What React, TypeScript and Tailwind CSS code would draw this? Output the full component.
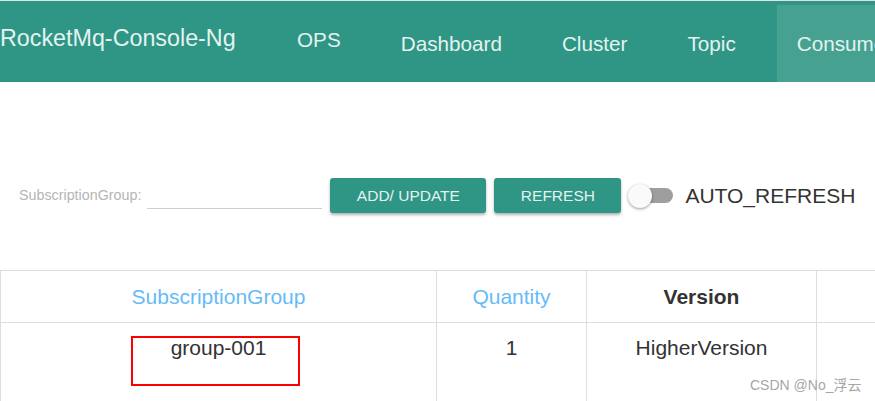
import React from "react";

export default function App() {
  return (
    <div className="relative w-[875px] h-[401px] overflow-hidden bg-white font-['Liberation_Sans',Arial,sans-serif]">
      {/* Header */}
      <div className="bg-[#e2e2e2] pt-[1px]">
        <div className="h-[81px] bg-[#2f9585] flex items-start text-[#e3f3f0] whitespace-nowrap overflow-hidden">
          <div className="w-[297px] shrink-0 mt-[26px] text-[23.3px] leading-[23px]">RocketMq-Console-Ng</div>
          <div className="shrink-0 mt-[28px] text-[20.7px] leading-[21px]">OPS</div>
          <div className="shrink-0 ml-[60px] mt-[32px] text-[20.7px] leading-[21px]">Dashboard</div>
          <div className="shrink-0 ml-[60px] mt-[32px] text-[20.7px] leading-[21px]">Cluster</div>
          <div className="shrink-0 ml-[60px] mt-[32px] text-[20.7px] leading-[21px]">Topic</div>
          <div className="shrink-0 ml-[41px] mt-[4px] h-[77px] bg-[#46a191] pl-[20px] pr-[20px] pt-[28px] text-[20.7px] leading-[21px]">
            Consumer
          </div>
        </div>
      </div>

      {/* Toolbar */}
      <div className="mt-[96px] h-[35px] pl-[19px] flex items-center whitespace-nowrap">
        <span className="text-[14.3px] text-[#b5b5b5] mt-[1px]">SubscriptionGroup:</span>
        <div className="ml-[6px] w-[175px] h-[26px] border-b border-[#cfcfcf]" />
        <button className="ml-[8px] w-[156px] h-[35px] rounded-[3px] bg-[#2f9585] text-[#e3f3f0] text-[15.5px] shadow-[0_2px_3px_rgba(0,0,0,0.3)]">
          ADD/ UPDATE
        </button>
        <button className="ml-[8px] w-[127px] h-[35px] rounded-[3px] bg-[#2f9585] text-[#e3f3f0] text-[15.5px] shadow-[0_2px_3px_rgba(0,0,0,0.3)]">
          REFRESH
        </button>
        <div className="relative ml-[7px] w-[45px] h-[24px] flex items-center">
          <div className="ml-[10px] w-[35px] h-[15px] rounded-full bg-[#9e9e9e]" />
          <div className="absolute left-0 top-0 w-[24px] h-[24px] rounded-full bg-[#fafafa] shadow-[0_1px_3px_rgba(0,0,0,0.4)]" />
        </div>
        <span className="ml-[12px] text-[21px] text-[#333333]">AUTO_REFRESH</span>
      </div>

      {/* Table */}
      <div className="mt-[57px] border-t border-l border-[#dddddd] grid grid-cols-[436px_150px_230px_1fr] text-[21px] whitespace-nowrap">
        <div className="h-[52px] border-b border-r border-[#dddddd] flex items-center justify-center text-[#66bbf7]">SubscriptionGroup</div>
        <div className="h-[52px] border-b border-r border-[#dddddd] flex items-center justify-center text-[#66bbf7]">Quantity</div>
        <div className="h-[52px] border-b border-r border-[#dddddd] flex items-center justify-center font-bold text-[#333333]">Version</div>
        <div className="h-[52px] border-b border-[#dddddd]" />
        <div className="h-[90px] border-r border-[#dddddd] pt-[13px] text-center leading-[24px] text-[#333333]">group-001</div>
        <div className="h-[90px] border-r border-[#dddddd] pt-[13px] text-center leading-[24px] text-[#333333]">1</div>
        <div className="h-[90px] border-r border-[#dddddd] pt-[13px] text-center leading-[24px] text-[#333333]">HigherVersion</div>
        <div className="h-[90px]" />
      </div>

      {/* Annotation box */}
      <div className="absolute left-[131px] top-[336px] w-[169px] h-[50px] border-2 border-[#ff0000]" />

      {/* Watermark */}
      <div className="absolute left-[750px] top-[376px] text-[14px] leading-[18px] text-[#a6a6a6] whitespace-nowrap font-['Liberation_Sans','Noto_Sans_CJK_SC',sans-serif]">
        CSDN @No_浮云
      </div>
    </div>
  );
}
